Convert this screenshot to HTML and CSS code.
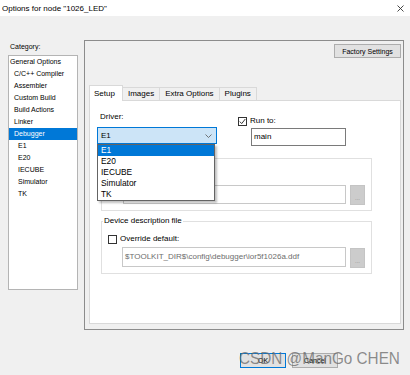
FILE: index.html
```html
<!DOCTYPE html>
<html lang="en">
<head>
  <meta charset="UTF-8">
  <title>Options for node "1026_LED"</title>
  <link rel="stylesheet" href="styles.css">
</head>
<body>
  <div class="titlebar">
    <span class="title">Options for node "1026_LED"</span>
    <svg class="close" width="7" height="7" viewBox="0 0 7 7">
      <path d="M0.5 0.5 L6.5 6.5 M6.5 0.5 L0.5 6.5" stroke="#333" stroke-width="0.9" fill="none"/>
    </svg>
  </div>

  <div class="dialog">
    <div class="category">
      <div class="cat-label">Category:</div>
      <ul class="cat-list">
        <li class="lvl0">General Options</li>
        <li class="lvl1">C/C++ Compiler</li>
        <li class="lvl1">Assembler</li>
        <li class="lvl1">Custom Build</li>
        <li class="lvl1">Build Actions</li>
        <li class="lvl1">Linker</li>
        <li class="lvl1 selected">Debugger</li>
        <li class="lvl2">E1</li>
        <li class="lvl2">E20</li>
        <li class="lvl2">IECUBE</li>
        <li class="lvl2">Simulator</li>
        <li class="lvl2">TK</li>
      </ul>
    </div>

    <div class="options">
      <div class="options-head">
        <button class="btn factory">Factory Settings</button>
      </div>

      <div class="tabs">
        <div class="tab active">Setup</div>
        <div class="tab">Images</div>
        <div class="tab">Extra Options</div>
        <div class="tab">Plugins</div>
      </div>

      <div class="tab-page">
        <div class="top-row">
          <div class="driver">
            <div class="label">Driver:</div>
            <div class="select">
              <span>E1</span>
              <svg class="chevron" width="7" height="4" viewBox="0 0 7 4">
                <path d="M0.5 0.5 L3.5 3.5 L6.5 0.5" stroke="#555" stroke-width="0.8" fill="none"/>
              </svg>
              <ul class="dropdown">
                <li class="hl">E1</li>
                <li>E20</li>
                <li>IECUBE</li>
                <li>Simulator</li>
                <li>TK</li>
              </ul>
            </div>
          </div>
          <div class="runto">
            <div class="check">
              <span class="box">
                <svg width="7" height="7" viewBox="0 0 7 7">
                  <path d="M0.8 3.6 L2.7 5.6 L6.3 1" stroke="#222" stroke-width="0.9" fill="none"/>
                </svg>
              </span>
              <span>Run to:</span>
            </div>
            <div class="input runto-input">main</div>
          </div>
        </div>

        <fieldset class="group group1">
          <div class="path-row">
            <div class="input path"></div>
            <span class="dots">...</span>
          </div>
        </fieldset>

        <fieldset class="group group2">
          <legend>Device description file</legend>
          <div class="check override">
            <span class="box"></span>
            <span>Override default:</span>
          </div>
          <div class="path-row row2">
            <div class="input path">$TOOLKIT_DIR$\config\debugger\ior5f1026a.ddf</div>
            <span class="dots">...</span>
          </div>
        </fieldset>
      </div>
    </div>
  </div>

  <div class="footer">
    <button class="btn ok">OK</button>
    <button class="btn">Cancel</button>
  </div>

  <div class="watermark">CSDN @ManGo CHEN</div>
</body>
</html>
```

FILE: styles.css
```css
body {
  margin: 0;
  width: 410px;
  height: 375px;
  overflow: hidden;
  background-color: #f0f0f0;
  font-family: 'Liberation Sans', Arial, sans-serif;
  font-size: 8px;
  color: #000;
  position: relative;
}
.titlebar {
  height: 16px;
  background-color: #ffffff;
  display: flex;
  align-items: center;
  justify-content: space-between;
  padding: 0 6px 0 2px;
}
.title {
  font-size: 8px;
}
.close {
  display: block;
}

.dialog {
  display: flex;
  align-items: flex-start;
  gap: 6px;
  padding: 24px 0 0 8px;
}
.category {
  width: 70px;
  padding-top: 2px;
}
.cat-label {
  font-size: 7px;
  line-height: 10px;
  margin: 0 0 3px 2px;
}
.cat-list {
  list-style: none;
  margin: 0;
  padding: 0;
  height: 235px;
  box-sizing: border-box;
  background-color: #ffffff;
  border: 1px solid #b4b4b4;
}
.cat-list li {
  height: 12px;
  line-height: 12px;
  font-size: 7px;
  white-space: nowrap;
}
.lvl0 { padding-left: 1px; }
.lvl1 { padding-left: 5px; }
.lvl2 { padding-left: 9px; }
.cat-list .selected {
  background-color: #0078d7;
  color: #ffffff;
}

.options {
  width: 320px;
  height: 290px;
  box-sizing: border-box;
  border: 1px solid #8c8c8c;
  padding: 3px 2px 5px 4px;
  display: flex;
  flex-direction: column;
}
.options-head {
  display: flex;
  justify-content: flex-end;
  height: 14px;
}
.btn {
  font-family: inherit;
  font-size: 7px;
  color: #000;
  background-color: #e1e1e1;
  border: 1px solid #adadad;
  padding: 0;
  margin: 0;
  height: 14px;
}
.factory {
  width: 67px;
}

.tabs {
  display: flex;
  align-items: flex-end;
  height: 15px;
  margin-top: 27px;
}
.tab {
  height: 13px;
  line-height: 12px;
  padding: 0 5px;
  box-sizing: border-box;
  border: 1px solid #d9d9d9;
  border-bottom: none;
  margin-left: -1px;
  background-color: #f0f0f0;
  white-space: nowrap;
}
.tab.active {
  height: 16px;
  line-height: 15px;
  margin-left: 0;
  margin-bottom: -1px;
  padding: 0 7px 0 4px;
  background-color: #ffffff;
  position: relative;
}

.tab-page {
  flex: 1;
  background-color: #ffffff;
  border: 1px solid #d9d9d9;
  padding: 11px 0 0 0;
}
.top-row {
  display: flex;
  align-items: flex-start;
  padding-left: 7px;
}
.label {
  line-height: 10px;
  padding-left: 3px;
}
.select {
  position: relative;
  width: 120px;
  height: 17px;
  box-sizing: border-box;
  margin-top: 5px;
  background-color: #cce4f7;
  border: 1px solid #0078d7;
  padding: 0 4px 0 3px;
  display: flex;
  align-items: center;
  justify-content: space-between;
}
.dropdown {
  position: absolute;
  top: 16px;
  left: -1px;
  width: 118px;
  box-sizing: border-box;
  list-style: none;
  margin: 0;
  padding: 0;
  background-color: #ffffff;
  border: 1px solid #646464;
  box-shadow: 2px 2px 2px rgba(0, 0, 0, 0.25);
  z-index: 2;
}
.dropdown li {
  height: 11px;
  line-height: 11px;
  font-size: 8.4px;
  padding-left: 3px;
}
.dropdown .hl {
  background-color: #0078d7;
  color: #ffffff;
}

.runto {
  margin-left: 21px;
  padding-top: 4px;
}
.check {
  display: flex;
  align-items: center;
  gap: 3px;
  height: 10px;
  line-height: 10px;
}
.box {
  width: 9px;
  height: 9px;
  box-sizing: border-box;
  border: 1px solid #333333;
  background-color: #ffffff;
  display: flex;
  align-items: center;
  justify-content: center;
}
.box svg {
  display: block;
}
.input {
  box-sizing: border-box;
  background-color: #ffffff;
  border: 1px solid #c8c8c8;
  padding-left: 2px;
  white-space: nowrap;
  overflow: hidden;
}
.runto-input {
  width: 95px;
  height: 18px;
  line-height: 16px;
  margin: 2px 0 0 13px;
  border-color: #7a7a7a;
}

.group {
  width: 271px;
  box-sizing: border-box;
  border: 1px solid #e0e0e0;
  margin: 0 0 0 11px;
  min-inline-size: 0;
}
.group1 {
  height: 53px;
  margin-top: 12px;
  padding: 26px 6px 6px 21px;
}
.group2 {
  margin-top: 5px;
  padding: 0 6px 5px 6px;
}
.group2 legend {
  line-height: 10px;
  padding: 0 1px;
  margin-left: -5px;
}
.override {
  margin-top: 8px;
}
.path-row {
  display: flex;
  align-items: flex-start;
  gap: 4px;
}
.path {
  flex: 1;
  height: 19px;
  line-height: 17px;
  color: #6d6d6d;
}
.row2 {
  margin: 3px 0 0 14px;
}
.row2 .path {
  height: 20px;
  line-height: 18px;
}
.dots {
  width: 15px;
  height: 20px;
  box-sizing: border-box;
  background-color: #cccccc;
  border: 1px solid #c4c4c4;
  color: #8a8a8a;
  font-size: 6px;
  text-align: center;
  line-height: 24px;
}
.row2 .dots {
  margin-top: 1px;
}

.footer {
  display: flex;
  justify-content: flex-end;
  gap: 6px;
  padding-right: 72px;
  margin-top: 23px;
}
.footer .btn {
  width: 46px;
  height: 15px;
}
.footer .ok {
  border-color: #0078d7;
}

.watermark {
  position: absolute;
  left: 239px;
  top: 349px;
  font-size: 17px;
  line-height: 20px;
  color: rgba(105, 105, 105, 0.75);
  white-space: nowrap;
  transform: scaleX(0.9);
  transform-origin: left center;
}
```
